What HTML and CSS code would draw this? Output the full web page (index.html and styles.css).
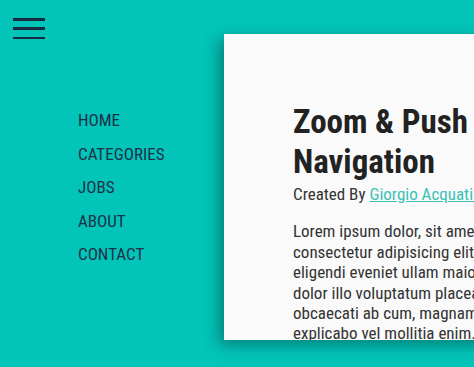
FILE: index.html
```html
<!DOCTYPE html>
<html lang="en">
<head>
<meta charset="utf-8">
<title>Zoom &amp; Push Navigation</title>
<link rel="stylesheet" href="styles.css">
</head>
<body>
<button class="menu-toggle" aria-label="Menu">
  <span class="bar"></span><span class="bar"></span><span class="bar"></span>
</button>
<div class="layout">
  <nav class="nav">
    <a href="#">HOME</a>
    <a href="#">CATEGORIES</a>
    <a href="#">JOBS</a>
    <a href="#">ABOUT</a>
    <a href="#">CONTACT</a>
  </nav>
  <main class="card">
    <h1 class="title">Zoom &amp; Push<br>Navigation</h1>
    <p class="credit">Created By <a href="#">Giorgio Acquati.</a></p>
    <p class="text">
      <span>Lorem ipsum dolor, sit amet</span>
      <span>consectetur adipisicing elit. Quasi</span>
      <span>eligendi eveniet ullam maiores</span>
      <span>dolor illo voluptatum placeat</span>
      <span>obcaecati ab cum, magnam</span>
      <span>explicabo vel mollitia enim.</span>
    </p>
  </main>
</div>
</body>
</html>
```
FILE: styles.css
```css
html, body {
  margin: 0;
  padding: 0;
  overflow: hidden;
  height: 100%;
}
body {
  background: #03c4b8;
  font-family: "Roboto Condensed", "Roboto", sans-serif;
  font-stretch: 75%;
}
.menu-toggle {
  position: absolute;
  left: 13px;
  top: 18px;
  width: 32px;
  height: 21px;
  padding: 0;
  border: 0;
  background: none;
  display: flex;
  flex-direction: column;
  justify-content: space-between;
  cursor: pointer;
}
.bar {
  display: block;
  height: 2.5px;
  width: 32px;
  background: #172c42;
}
.layout {
  display: grid;
  grid-template-columns: 224px 420px;
}
.nav {
  display: flex;
  flex-direction: column;
  gap: 13px;
  padding: 110px 0 0 78px;
}
.nav a {
  color: #1b3247;
  text-decoration: none;
  font-size: 17px;
  line-height: 20.5px;
}
.card {
  margin-top: 34px;
  height: 306px;
  box-sizing: border-box;
  padding: 68px 0 0 69px;
  background: #fafafa;
  overflow: hidden;
  box-shadow: -5px 5px 14px rgba(0, 0, 0, 0.34);
  color: #333;
}
.title {
  margin: 0;
  font-size: 33px;
  line-height: 40px;
  font-weight: 700;
  color: #222;
}
.credit {
  margin: 2px 0 0;
  font-size: 17px;
  line-height: 20.4px;
  white-space: nowrap;
}
.credit a {
  color: #3bc1b8;
}
.text {
  margin: 17px 0 0;
  font-size: 17px;
  line-height: 20.4px;
}
.text span {
  display: block;
  white-space: nowrap;
}
```
